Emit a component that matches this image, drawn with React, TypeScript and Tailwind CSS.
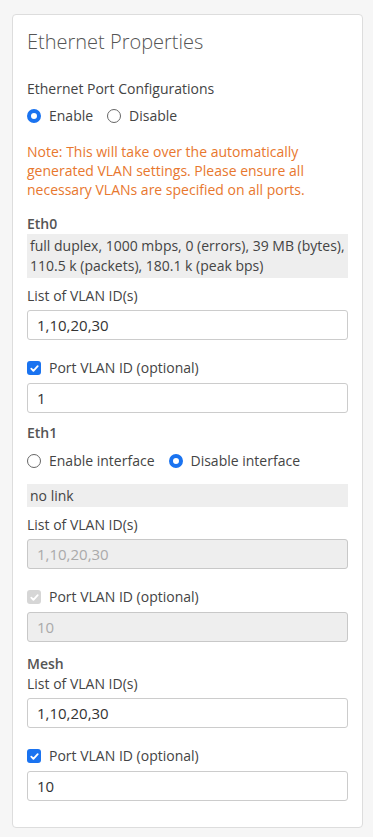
import React from "react";

function Radio({ checked, label }: { checked?: boolean; label: string }) {
  return (
    <label className="flex items-center gap-2">
      {checked ? (
        <span className="w-[14px] h-[14px] rounded-full border-[4px] border-[#1a73f0] bg-white" />
      ) : (
        <span className="w-[14px] h-[14px] rounded-full border border-[#666] bg-white" />
      )}
      <span>{label}</span>
    </label>
  );
}

function Checkbox({ disabled }: { disabled?: boolean }) {
  return (
    <span
      className={
        "w-[14px] h-[14px] rounded-[3px] flex items-center justify-center " +
        (disabled ? "bg-[#d6d6d6]" : "bg-[#1a73f0]")
      }
    >
      <svg viewBox="0 0 12 12" className="w-[11px] h-[11px]" fill="none" stroke="white" strokeWidth={2}>
        <path d="M2.5 6.2l2.3 2.3 4.7-5" strokeLinecap="round" strokeLinejoin="round" />
      </svg>
    </span>
  );
}

function TextInput({ value, disabled }: { value: string; disabled?: boolean }) {
  return (
    <div
      className={
        "h-[30px] flex items-center px-[9px] border rounded-[3px] text-[15px] " +
        (disabled ? "bg-[#eeeeee] border-[#c8c8c8] text-[#aaaaaa]" : "bg-white border-[#cccccc] text-[#333]")
      }
    >
      {value}
    </div>
  );
}

function PortVlan({ value, disabled }: { value: string; disabled?: boolean }) {
  return (
    <>
      <div className="mt-[18px] h-5 flex items-center gap-2">
        <Checkbox disabled={disabled} />
        <span>Port VLAN ID (optional)</span>
      </div>
      <div className="mt-[5px]">
        <TextInput value={value} disabled={disabled} />
      </div>
    </>
  );
}

export default function App() {
  return (
    <div className="min-h-screen bg-[#f6f6f6] pt-[14px] pb-[9px]" style={{ fontFamily: '"Open Sans", sans-serif' }}>
      <div className="ml-3 mr-[10px] bg-white border border-[#dddddd] rounded-[4px] px-[14px] pt-[13px] pb-[26px] text-[14px] leading-5 text-[#444]">
        <h2 className="text-[20px] leading-7 font-light text-[#555]">Ethernet Properties</h2>

        <div className="mt-[23px]">Ethernet Port Configurations</div>
        <div className="mt-[7px] h-5 flex items-center gap-[14px]">
          <Radio checked label="Enable" />
          <Radio label="Disable" />
        </div>

        <p className="mt-[16px] text-[#e8772e] leading-[19px]">
          Note: This will take over the automatically generated VLAN settings. Please ensure all necessary VLANs are
          specified on all ports.
        </p>

        {/* Eth0 */}
        <div className="mt-[15px] font-semibold text-[#555]">Eth0</div>
        <div className="bg-[#eeeeee] px-[3px] py-[2px]">
          full duplex, 1000 mbps, 0 (errors), 39 MB (bytes), 110.5 k (packets), 180.1 k (peak bps)
        </div>
        <div className="mt-2">List of VLAN ID(s)</div>
        <div className="mt-1">
          <TextInput value="1,10,20,30" />
        </div>
        <PortVlan value="1" />

        {/* Eth1 */}
        <div className="mt-[10px] font-semibold text-[#555]">Eth1</div>
        <div className="mt-2 h-5 flex items-center gap-[14px]">
          <Radio label="Enable interface" />
          <Radio checked label="Disable interface" />
        </div>
        <div className="mt-[13px] bg-[#eeeeee] px-[3px] h-[23px] flex items-center">no link</div>
        <div className="mt-2">List of VLAN ID(s)</div>
        <div className="mt-1">
          <TextInput value="1,10,20,30" disabled />
        </div>
        <PortVlan value="10" disabled />

        {/* Mesh */}
        <div className="mt-3 font-semibold text-[#555]">Mesh</div>
        <div>List of VLAN ID(s)</div>
        <div className="mt-1">
          <TextInput value="1,10,20,30" />
        </div>
        <PortVlan value="10" />
      </div>
    </div>
  );
}
